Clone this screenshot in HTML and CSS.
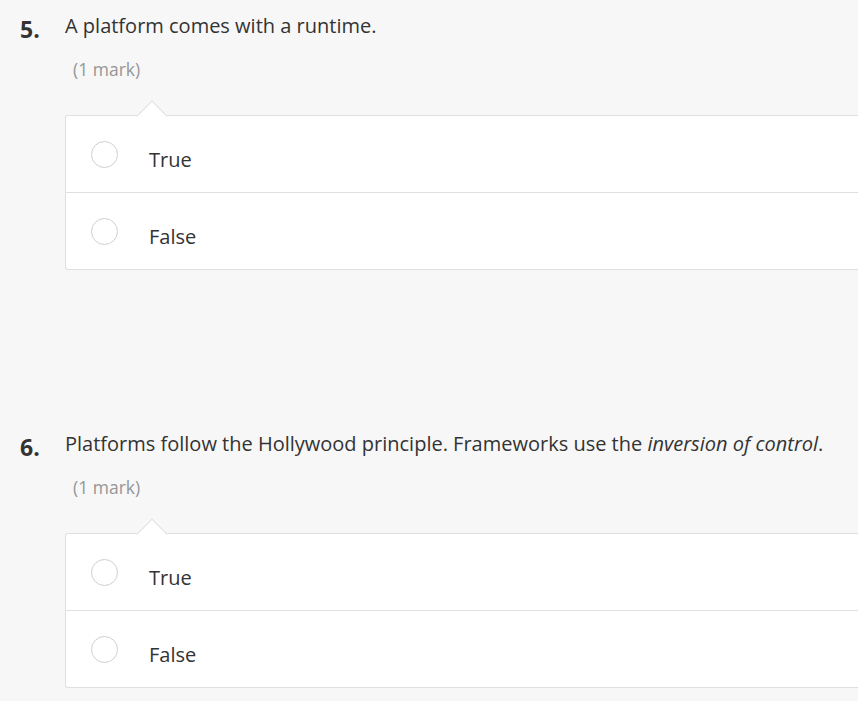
FILE: index.html
```html
<!DOCTYPE html>
<html lang="en">
<head>
<meta charset="utf-8">
<title>Quiz</title>
<link rel="stylesheet" href="styles.css">
</head>
<body>
<main class="quiz">
  <section class="question">
    <div class="question-head">
      <span class="num">5.</span>
      <p class="text">A platform comes with a runtime.</p>
    </div>
    <p class="mark">(1 mark)</p>
    <div class="options">
      <label class="option"><span class="radio"></span><span class="label">True</span></label>
      <label class="option"><span class="radio"></span><span class="label">False</span></label>
    </div>
  </section>
  <section class="question">
    <div class="question-head">
      <span class="num">6.</span>
      <p class="text">Platforms follow the Hollywood principle. Frameworks use the <em>inversion of control</em>.</p>
    </div>
    <p class="mark">(1 mark)</p>
    <div class="options">
      <label class="option"><span class="radio"></span><span class="label">True</span></label>
      <label class="option"><span class="radio"></span><span class="label">False</span></label>
    </div>
  </section>
</main>
</body>
</html>
```

FILE: styles.css
```css
html {
  overflow: hidden;
}
body {
  margin: 0;
  background: #f7f7f7;
  font-family: "Open Sans", "Noto Sans", sans-serif;
  color: #333;
}
.quiz {
  padding-top: 12px;
}
.question + .question {
  margin-top: 160px;
}
.question-head {
  display: flex;
  align-items: flex-start;
}
.num {
  width: 45px;
  padding-left: 20px;
  box-sizing: content-box;
  flex: none;
  font-size: 23px;
  font-weight: 700;
  line-height: 28px;
  margin-top: 3px;
}
.text {
  margin: 0;
  font-size: 20px;
  line-height: 28px;
}
.text em {
  font-style: italic;
}
.mark {
  margin: 14px 0 0 73px;
  font-size: 17.5px;
  line-height: 24px;
  color: #969696;
}
.options {
  position: relative;
  margin: 34px 0 0 65px;
  background: #fff;
  border: 1px solid #e0e0e0;
  border-right: none;
  border-radius: 3px 0 0 3px;
}
.options::before {
  content: "";
  position: absolute;
  left: 75px;
  top: -11px;
  width: 21px;
  height: 21px;
  background: #fff;
  border-top: 1px solid #e0e0e0;
  border-left: 1px solid #e0e0e0;
  transform: rotate(45deg);
}
.option {
  position: relative;
  display: flex;
  align-items: flex-start;
  height: 76px;
  box-sizing: border-box;
  padding: 25px 0 0 25px;
}
.option + .option {
  border-top: 1px solid #e0e0e0;
  height: 77px;
}
.radio {
  flex: none;
  width: 27px;
  height: 27px;
  box-sizing: border-box;
  border: 1.5px solid #cfcfcf;
  border-radius: 50%;
  background: #fff;
}
.label {
  margin-left: 31px;
  padding-top: 5px;
  font-size: 20px;
  line-height: 28px;
  color: #333;
}
```
